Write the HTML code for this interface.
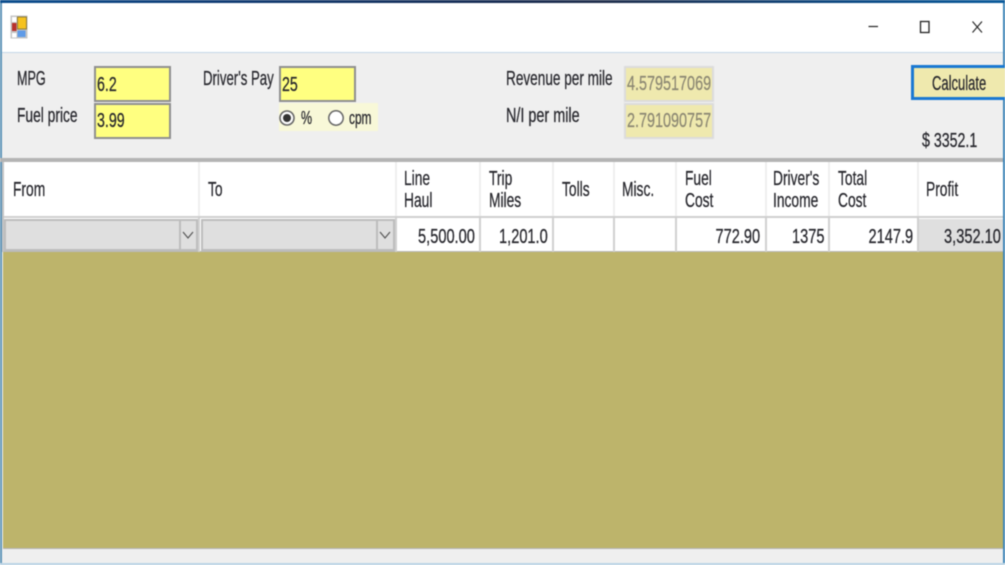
<!DOCTYPE html>
<html><head><meta charset="utf-8">
<style>
html,body{margin:0;padding:0;width:1005px;height:565px;overflow:hidden;background:#efefef}
#w{position:relative;width:1005px;height:565px;overflow:hidden;filter:blur(.5px);font-family:"Liberation Sans",sans-serif;color:#222}
#w div{position:absolute;box-sizing:border-box}
.t{position:absolute;white-space:nowrap;font-size:20px;line-height:22px;transform:scaleX(.69);transform-origin:left top;color:#26262c;-webkit-text-stroke:.25px #26262c}
.n{transform:scaleX(.71)}
.r{transform-origin:right top}
.in{background:#ffff80;border:2px solid #8f8f8f;width:77px;height:36px}
.ro{background:#efe9ae;border:2px solid #dcdcdc;width:90px;height:36px;outline:0}
.sep{background:#d0d0d0;width:2px}
.hs{background:#efefef;width:2px}
.cb{background:#dfdfdf;border:2px solid #bdbdbd;height:32px;top:219px}
.cs{background:#bdbdbd;width:2px;top:219px;height:32px}
</style></head><body>
<div id="w">
<div style="left:0;top:0;width:1005px;height:3px;background:linear-gradient(90deg,#0d4f8f 0,#123f78 20%,#1b2f55 50%,#24324f 60%,#0f4c86 85%,#0c5c9c 100%)"></div>
<div style="left:0;top:3px;width:1005px;height:49px;background:#fff"></div>
<div style="left:0;top:52px;width:1005px;height:1px;background:#c3d7e8"></div>
<div style="left:0;top:3px;width:2px;height:562px;background:#5f94b8"></div>
<div style="left:1003px;top:3px;width:2px;height:562px;background:#3f86b8"></div>
<div style="left:0;top:563px;width:1005px;height:2px;background:#bcd5e6"></div>

<svg style="position:absolute;left:10px;top:15px" width="18" height="24" viewBox="0 0 18 24">
<rect x="0.5" y="0.5" width="17" height="23" fill="#c4c4c4"/>
<rect x="2" y="2" width="4.5" height="5" fill="#fff"/>
<rect x="2" y="8" width="4.5" height="8" fill="#b8322c"/>
<rect x="2" y="18" width="4.5" height="4.5" fill="#fff"/>
<rect x="7.5" y="2" width="9" height="12" fill="#f5c21f" stroke="#8f7c3a" stroke-width="1"/>
<rect x="7.5" y="15.5" width="8" height="6.5" fill="#5f9be8"/>
</svg>

<svg style="position:absolute;left:860px;top:15px" width="130" height="24" viewBox="0 0 130 24" fill="none" stroke="#222">
<path d="M8.5 11.5H18" stroke-width="1.2"/>
<rect x="60.5" y="6.5" width="8.5" height="11" stroke-width="1.3"/>
<path d="M112.5 6.5l9.5 11M122 6.5l-9.5 11" stroke-width="1.1"/>
</svg>

<span class="t" style="left:17px;top:68px;transform:scaleX(.63)">MPG</span>
<span class="t" style="left:17px;top:105px">Fuel price</span>
<div class="in" style="left:94px;top:66px"></div>
<div class="in" style="left:94px;top:103px"></div>
<span class="t n" style="left:97px;top:74px">6.2</span>
<span class="t n" style="left:97px;top:110px">3.99</span>

<span class="t" style="left:203px;top:68px;transform:scaleX(.66)">Driver's Pay</span>
<div class="in" style="left:279px;top:66px"></div>
<span class="t n" style="left:282px;top:74px">25</span>

<div style="left:279px;top:103px;width:99px;height:28px;background:#f8f8d8"></div>
<svg style="position:absolute;left:279px;top:106px" width="70" height="24" viewBox="0 0 70 24">
<circle cx="8" cy="12" r="7" fill="#fff" stroke="#666" stroke-width="1.6"/>
<circle cx="8" cy="12" r="4" fill="#333"/>
<circle cx="57" cy="12" r="7.2" fill="#fff" stroke="#666" stroke-width="1.5"/>
</svg>
<span class="t" style="left:301px;top:107px;font-size:18px">%</span>
<span class="t" style="left:349px;top:107px;font-size:18px;transform:scaleX(.66)">cpm</span>

<span class="t" style="left:506px;top:68px;transform:scaleX(.68)">Revenue per mile</span>
<span class="t" style="left:506px;top:105px;transform:scaleX(.72)">N/I per mile</span>
<div class="ro" style="left:624px;top:66px"></div>
<div class="ro" style="left:624px;top:103px"></div>
<span class="t n" style="left:627px;top:73px;color:#8a8672;-webkit-text-stroke:.2px #8a8672;transform:scaleX(.72)">4.579517069</span>
<span class="t n" style="left:627px;top:110px;color:#8a8672;-webkit-text-stroke:.2px #8a8672;transform:scaleX(.72)">2.791090757</span>

<div style="left:911px;top:65px;width:94px;height:35px;background:#efe9ae;border:3px solid #1a78d2;border-right:0"></div>
<span class="t" style="left:932px;top:73px;transform:scaleX(.65)">Calculate</span>
<span class="t n" style="left:922px;top:130px">$ 3352.1</span>

<!-- grid -->
<div style="left:0;top:158px;width:1003px;height:4px;background:#b4b4b4"></div>
<div style="left:2px;top:162px;width:2px;height:90px;background:#c4c4c4"></div>
<div style="left:4px;top:162px;width:999px;height:54px;background:#fff"></div>
<div style="left:4px;top:216px;width:999px;height:2px;background:#cfcfcf"></div>
<div style="left:4px;top:218px;width:999px;height:34px;background:#fff"></div>
<div style="left:3px;top:251px;width:1000px;height:1px;background:#b9b9b9"></div>

<div class="hs" style="left:198px;top:162px;height:54px"></div>
<div class="hs" style="left:395px;top:162px;height:54px"></div>
<div class="hs" style="left:479px;top:162px;height:54px"></div>
<div class="hs" style="left:552px;top:162px;height:54px"></div>
<div class="hs" style="left:613px;top:162px;height:54px"></div>
<div class="hs" style="left:675px;top:162px;height:54px"></div>
<div class="hs" style="left:765px;top:162px;height:54px"></div>
<div class="hs" style="left:828px;top:162px;height:54px"></div>
<div class="hs" style="left:917px;top:162px;height:54px"></div>

<div class="sep" style="left:198px;top:218px;height:34px"></div>
<div class="sep" style="left:395px;top:218px;height:34px"></div>
<div class="sep" style="left:479px;top:218px;height:34px"></div>
<div class="sep" style="left:552px;top:218px;height:34px"></div>
<div class="sep" style="left:613px;top:218px;height:34px"></div>
<div class="sep" style="left:675px;top:218px;height:34px"></div>
<div class="sep" style="left:765px;top:218px;height:34px"></div>
<div class="sep" style="left:828px;top:218px;height:34px"></div>
<div class="sep" style="left:917px;top:218px;height:34px"></div>

<div class="cb" style="left:4px;width:194px"></div>
<div class="cs" style="left:179px"></div>
<div class="cb" style="left:201px;width:194px"></div>
<div class="cs" style="left:376px"></div>
<svg style="position:absolute;left:182px;top:230px" width="12" height="10" viewBox="0 0 12 10" fill="none" stroke="#555" stroke-width="1.2"><path d="M1 2l5 6 5-6"/></svg>
<svg style="position:absolute;left:379px;top:230px" width="12" height="10" viewBox="0 0 12 10" fill="none" stroke="#555" stroke-width="1.2"><path d="M1 2l5 6 5-6"/></svg>
<div style="left:919px;top:219px;width:84px;height:32px;background:#dfdfdf"></div>

<span class="t" style="left:13px;top:179px">From</span>
<span class="t" style="left:208px;top:179px">To</span>
<span class="t" style="left:404px;top:168px">Line</span>
<span class="t" style="left:404px;top:190px">Haul</span>
<span class="t" style="left:489px;top:168px">Trip</span>
<span class="t" style="left:489px;top:190px">Miles</span>
<span class="t" style="left:562px;top:179px">Tolls</span>
<span class="t" style="left:622px;top:179px">Misc.</span>
<span class="t" style="left:685px;top:168px">Fuel</span>
<span class="t" style="left:685px;top:190px">Cost</span>
<span class="t" style="left:773px;top:168px">Driver's</span>
<span class="t" style="left:773px;top:190px">Income</span>
<span class="t" style="left:838px;top:168px">Total</span>
<span class="t" style="left:838px;top:190px">Cost</span>
<span class="t" style="left:926px;top:179px">Profit</span>

<span class="t n r" style="right:530px;top:226px;transform:scaleX(.73)">5,500.00</span>
<span class="t n r" style="right:457px;top:226px;transform:scaleX(.73)">1,201.0</span>
<span class="t n r" style="right:245px;top:226px;transform:scaleX(.73)">772.90</span>
<span class="t n r" style="right:181px;top:226px;transform:scaleX(.73)">1375</span>
<span class="t n r" style="right:92px;top:226px;transform:scaleX(.73)">2147.9</span>
<span class="t n r" style="right:4px;top:226px;transform:scaleX(.73)">3,352.10</span>

<div style="left:3px;top:252px;width:1000px;height:296px;background:#bdb46b"></div>
<div style="left:3px;top:548px;width:1000px;height:1px;background:#b4b4b4"></div>
</div>
</body></html>
